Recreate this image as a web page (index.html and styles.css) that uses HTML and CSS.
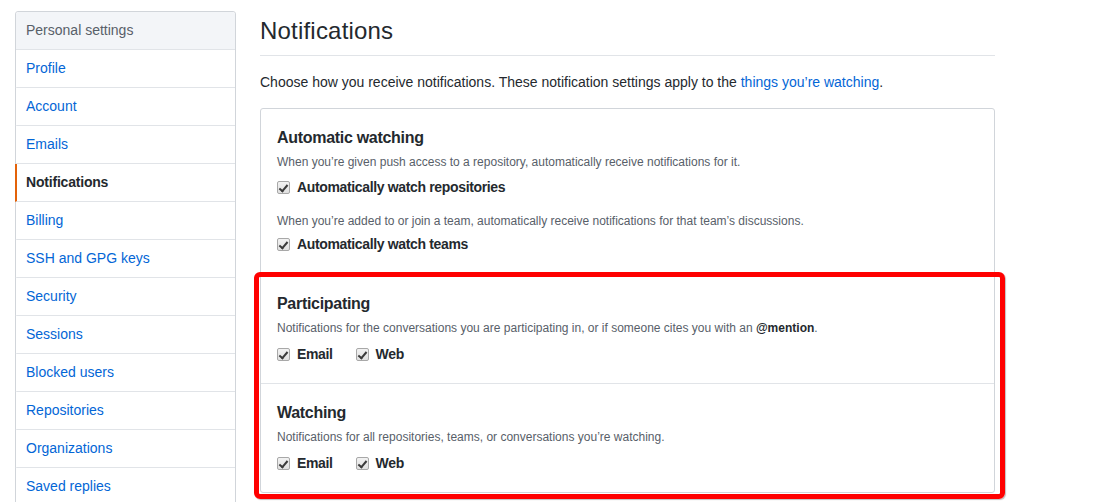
FILE: index.html
```html
<!DOCTYPE html>
<html>
  <head>
    <meta charset="utf-8">
    <title>Notification settings</title>
    <link rel="stylesheet" href="styles.css">
  </head>
  <body>
  <div class="page">
    <nav class="menu">
      <div class="menu-heading">Personal settings</div>
      <a class="menu-item" href="#">Profile</a>
      <a class="menu-item" href="#">Account</a>
      <a class="menu-item" href="#">Emails</a>
      <a class="menu-item selected" href="#">Notifications</a>
      <a class="menu-item" href="#">Billing</a>
      <a class="menu-item" href="#">SSH and GPG keys</a>
      <a class="menu-item" href="#">Security</a>
      <a class="menu-item" href="#">Sessions</a>
      <a class="menu-item" href="#">Blocked users</a>
      <a class="menu-item" href="#">Repositories</a>
      <a class="menu-item" href="#">Organizations</a>
      <a class="menu-item" href="#">Saved replies</a>
    </nav>

    <main class="settings">
      <h2 class="subhead">Notifications</h2>
      <p class="lead">Choose how you receive notifications. These notification settings apply to the <a href="#">things you’re watching</a>.</p>

      <div class="box">
        <section class="box-row box-row-auto">
          <h3>Automatic watching</h3>
          <p class="note">When you’re given push access to a repository, automatically receive notifications for it.</p>
          <div class="checks checks-first">
            <label class="check"><span class="cb"></span>Automatically watch repositories</label>
          </div>
          <p class="note note-gap">When you’re added to or join a team, automatically receive notifications for that team’s discussions.</p>
          <div class="checks checks-tight">
            <label class="check"><span class="cb"></span>Automatically watch teams</label>
          </div>
        </section>

        <div class="highlight">
          <section class="box-row">
            <h3>Participating</h3>
            <p class="note">Notifications for the conversations you are participating in, or if someone cites you with an <strong>@mention</strong>.</p>
            <div class="checks">
              <label class="check"><span class="cb"></span>Email</label>
              <label class="check"><span class="cb"></span>Web</label>
            </div>
          </section>
          <section class="box-row">
            <h3>Watching</h3>
            <p class="note">Notifications for all repositories, teams, or conversations you’re watching.</p>
            <div class="checks">
              <label class="check"><span class="cb"></span>Email</label>
              <label class="check"><span class="cb"></span>Web</label>
            </div>
          </section>
        </div>
      </div>
    </main>
  </div>
  </body>
</html>
```

FILE: styles.css
```css
* {
  box-sizing: border-box;
  margin: 0;
}

body, html {
  margin: 0;
  width: 100%;
  height: 100%;
  overflow: hidden;
  background: #fff;
}

body {
  font-family: "Liberation Sans", Arial, sans-serif;
  font-size: 14px;
  line-height: 1.5;
  color: #24292e;
}

a {
  color: #0366d6;
  text-decoration: none;
}

.page {
  display: flex;
  align-items: flex-start;
  gap: 24px;
  padding: 11px 0 0 15px;
}

/* left menu */
.menu {
  width: 221px;
  flex: none;
  display: flex;
  flex-direction: column;
  border: 1px solid #d1d5da;
  border-radius: 3px;
}

.menu-heading {
  padding: 8px 10px;
  line-height: 21px;
  color: #586069;
  background: #f3f5f8;
  border-bottom: 1px solid #e1e4e8;
  border-radius: 3px 3px 0 0;
}

.menu-item {
  padding: 8px 10px;
  line-height: 21px;
  border-bottom: 1px solid #e1e4e8;
  border-left: 2px solid transparent;
  margin-left: -1px;
  padding-left: 9px;
}

.menu-item.selected {
  color: #24292e;
  font-weight: 600;
  letter-spacing: -0.2px;
  border-left-color: #e36209;
}

/* main column */
.settings {
  width: 735px;
  flex: none;
}

.subhead {
  font-size: 24px;
  font-weight: 400;
  line-height: 36px;
  margin-top: 2px;
  padding-bottom: 6px;
  border-bottom: 1px solid #e1e4e8;
  letter-spacing: 0.2px;
}

.lead {
  margin-top: 16px;
  line-height: 21px;
}

.box {
  margin-top: 15px;
  border: 1px solid #d1d5da;
  border-radius: 3px;
}

.box-row {
  padding: 19px 16px 19px;
  border-top: 1px solid #e1e4e8;
}

.box-row:first-child {
  border-top: 0;
}

.box-row-auto {
  padding-bottom: 21px;
}

.box-row h3 {
  font-size: 16px;
  font-weight: 600;
  line-height: 20px;
  letter-spacing: -0.3px;
  margin-bottom: 5px;
}

.note {
  font-size: 12px;
  line-height: 18px;
  color: #586069;
}

.note strong {
  color: #24292e;
}

.note-gap {
  margin-top: 15px;
}

.checks {
  display: flex;
  gap: 23px;
  margin-top: 7px;
}

.checks-first {
  margin-top: 6px;
}

.checks-tight {
  margin-top: 4px;
}

.check {
  display: flex;
  align-items: center;
  gap: 7px;
  font-weight: 600;
  line-height: 20px;
  letter-spacing: -0.35px;
}

.cb {
  position: relative;
  width: 13px;
  height: 13px;
  border: 1px solid #a8a8a8;
  border-radius: 2px;
  background: linear-gradient(#f2f2f2, #e0e0e0);
}

.cb::after {
  content: "";
  position: absolute;
  left: 3px;
  top: 1px;
  width: 3px;
  height: 7px;
  border: solid #3a3a3a;
  border-width: 0 2px 2px 0;
  transform: rotate(40deg);
}

/* red annotation round the last two rows */
.highlight {
  position: relative;
}

.highlight::after {
  content: "";
  position: absolute;
  top: -3px;
  left: -7px;
  right: -11px;
  bottom: -7px;
  border: 5px solid #ff0000;
  border-radius: 6px;
  box-shadow: 1px 1px 1px rgba(0,0,0,0.25);
  pointer-events: none;
}
```
